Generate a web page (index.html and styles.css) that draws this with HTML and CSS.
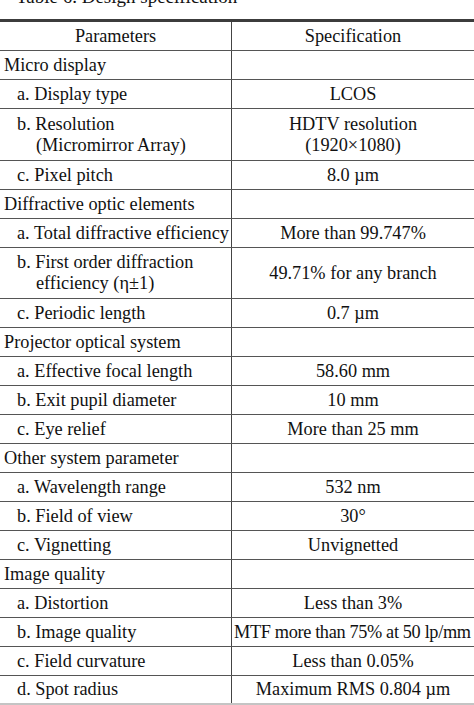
FILE: index.html
```html
<!DOCTYPE html>
<html>
<head>
<meta charset="utf-8">
<link rel="stylesheet" href="styles.css">
</head>
<body>
<div class="caption">Table 6. Design specification</div>
<div class="table">
  <div class="row head"><div class="c1 center">Parameters</div><div class="c2">Specification</div></div>
  <div class="row"><div class="c1">Micro display</div><div class="c2"></div></div>
  <div class="row"><div class="c1 sub">a. Display type</div><div class="c2">LCOS</div></div>
  <div class="row dbl1"><div class="c1 sub">b. Resolution<br><span class="cont">(Micromirror Array)</span></div><div class="c2">HDTV resolution<br>(1920×1080)</div></div>
  <div class="row"><div class="c1 sub">c. Pixel pitch</div><div class="c2">8.0 µm</div></div>
  <div class="row"><div class="c1">Diffractive optic elements</div><div class="c2"></div></div>
  <div class="row"><div class="c1 sub">a. Total diffractive efficiency</div><div class="c2">More than 99.747%</div></div>
  <div class="row dbl2"><div class="c1 sub">b. First order diffraction<br><span class="cont">efficiency (η±1)</span></div><div class="c2">49.71% for any branch</div></div>
  <div class="row"><div class="c1 sub">c. Periodic length</div><div class="c2">0.7 µm</div></div>
  <div class="row"><div class="c1">Projector optical system</div><div class="c2"></div></div>
  <div class="row"><div class="c1 sub">a. Effective focal length</div><div class="c2">58.60 mm</div></div>
  <div class="row"><div class="c1 sub">b. Exit pupil diameter</div><div class="c2">10 mm</div></div>
  <div class="row"><div class="c1 sub">c. Eye relief</div><div class="c2">More than 25 mm</div></div>
  <div class="row"><div class="c1">Other system parameter</div><div class="c2"></div></div>
  <div class="row"><div class="c1 sub">a. Wavelength range</div><div class="c2">532 nm</div></div>
  <div class="row"><div class="c1 sub">b. Field of view</div><div class="c2">30°</div></div>
  <div class="row"><div class="c1 sub">c. Vignetting</div><div class="c2">Unvignetted</div></div>
  <div class="row"><div class="c1">Image quality</div><div class="c2"></div></div>
  <div class="row"><div class="c1 sub">a. Distortion</div><div class="c2">Less than 3%</div></div>
  <div class="row"><div class="c1 sub">b. Image quality</div><div class="c2 tight">MTF more than 75% at 50 lp/mm</div></div>
  <div class="row"><div class="c1 sub">c. Field curvature</div><div class="c2">Less than 0.05%</div></div>
  <div class="row last"><div class="c1 sub">d. Spot radius</div><div class="c2">Maximum RMS 0.804 µm</div></div>
</div>
</body>
</html>
```
FILE: styles.css
```css
html, body {
  margin: 0;
  padding: 0;
  background: #ffffff;
  overflow: hidden;
}
body {
  width: 474px;
  height: 705px;
  font-family: "Liberation Serif", "Times New Roman", serif;
  color: #111111;
}
.caption {
  font-size: 19px;
  line-height: 22px;
  height: 22px;
  margin-top: -14px;
  margin-bottom: 11px;
  padding-left: 16px;
  white-space: nowrap;
}
.table {
  border-top: 3px solid #3c3c3c;
  width: 474px;
}
.row {
  display: grid;
  grid-template-columns: 231px 243px;
  height: 28px;
  border-bottom: 1px solid #555555;
  font-size: 18.3px;
  line-height: 21px;
}
.row.dbl1 { height: 51px; }
.row.dbl2 { height: 50px; }
.row.last {
  height: 27px;
  border-bottom: 2px solid #c4c4c4;
}
.c1 {
  display: flex;
  flex-direction: column;
  justify-content: center;
  align-items: flex-start;
  padding-left: 4px;
  white-space: nowrap;
}
.c1.center {
  align-items: center;
  padding-left: 0;
}
.c1 .cont { padding-left: 19px; }
.c1.sub {
  display: block;
  align-self: center;
  padding-left: 17px;
}
.c2 {
  border-left: 1px solid #444444;
  display: flex;
  align-items: center;
  justify-content: center;
  text-align: center;
  white-space: nowrap;
}
.c2.tight {
  letter-spacing: -0.35px;
  justify-content: flex-start;
  padding-left: 2px;
}
```
